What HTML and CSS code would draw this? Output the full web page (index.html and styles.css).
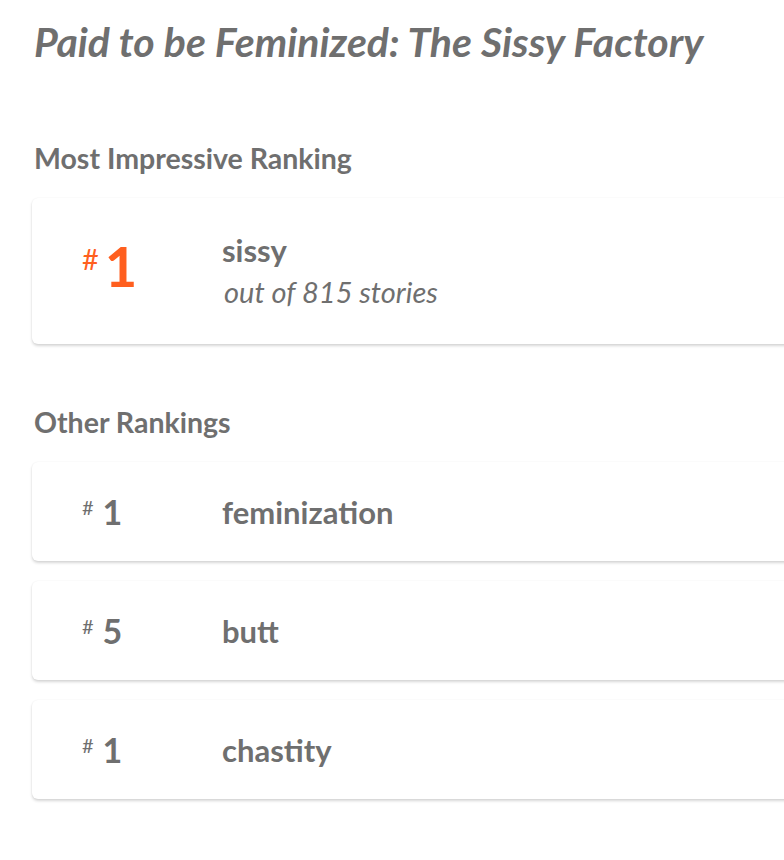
FILE: index.html
```html
<!DOCTYPE html>
<html>
<head>
<meta charset="utf-8">
<link rel="stylesheet" href="styles.css">
</head>
<body>
<div class="page">
  <h1 class="title">Paid to be Feminized: The Sissy Factory</h1>

  <section class="group group-top">
    <h2 class="group-label">Most Impressive Ranking</h2>
    <div class="card card-main">
      <div class="rank rank-main"><span class="hash">#</span><span class="num">1</span></div>
      <div class="info">
        <div class="tag">sissy</div>
        <div class="sub">out of 815 stories</div>
      </div>
    </div>
  </section>

  <section class="group">
    <h2 class="group-label">Other Rankings</h2>
    <div class="list">
      <div class="card">
        <div class="rank"><span class="hash">#</span><span class="num">1</span></div>
        <div class="tag">feminization</div>
      </div>
      <div class="card">
        <div class="rank"><span class="hash">#</span><span class="num">5</span></div>
        <div class="tag">butt</div>
      </div>
      <div class="card">
        <div class="rank"><span class="hash">#</span><span class="num">1</span></div>
        <div class="tag">chastity</div>
      </div>
    </div>
  </section>
</div>
</body>
</html>
```

FILE: styles.css
```css
html, body {
  margin: 0;
  padding: 0;
  background: #ffffff;
  overflow: hidden;
}

body {
  font-family: "Lato", "Open Sans", sans-serif;
  color: #6f6f6f;
}

.page {
  padding: 18px 0 30px 32px;
  overflow: hidden;
}

.title {
  margin: 0 0 0 2px;
  font-size: 41px;
  line-height: 48px;
  font-weight: 700;
  font-style: italic;
  color: #6f6f6f;
}

.group {
  margin-top: 61px;
}

.group-top {
  margin-top: 75px;
}

.group-label {
  margin: 0 0 23px 2px;
  font-size: 28.5px;
  line-height: 34px;
  font-weight: 700;
  color: #6f6f6f;
}

.list {
  display: flex;
  flex-direction: column;
  gap: 20px;
}

.card {
  width: calc(100% + 20px);
  box-sizing: border-box;
  height: 99px;
  background: #fff;
  border-radius: 6px;
  box-shadow: 0 2px 3px rgba(0, 0, 0, 0.16), 0 0 2px rgba(0, 0, 0, 0.06);
  display: grid;
  grid-template-columns: 140px 1fr;
  align-items: center;
  padding-left: 50px;
}

.card-main {
  height: 146px;
}

.rank {
  display: flex;
  align-items: flex-start;
  color: #6f6f6f;
}

.hash {
  font-size: 20px;
  line-height: 20px;
  margin-right: 9px;
  margin-top: 2px;
}

.num {
  font-size: 34px;
  line-height: 34px;
  font-weight: 700;
}

.rank-main {
  color: #ff5f1f;
  margin-bottom: 10px;
}

.rank-main .hash {
  font-size: 29px;
  line-height: 29px;
  margin-right: 6px;
  margin-top: 6px;
}

.rank-main .num {
  font-size: 56px;
  line-height: 56px;
}

.tag {
  font-size: 31px;
  line-height: 36px;
  font-weight: 700;
}

.sub {
  font-size: 29px;
  line-height: 36px;
  font-style: italic;
  margin-top: 6px;
  margin-left: 2px;
}
```
